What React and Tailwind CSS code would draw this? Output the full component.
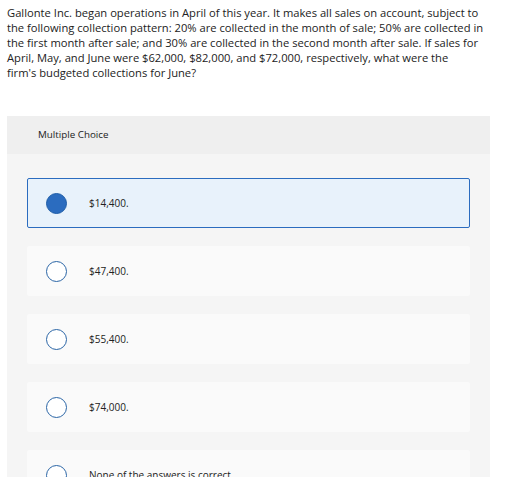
const options = ['$14,400.', '$47,400.', '$55,400.', '$74,000.', 'None of the answers is correct.']

function Radio({ checked }) {
  if (checked) {
    return <span className="block w-[21px] h-[21px] rounded-full bg-[#2b6cbf] border border-[#1f5ea8] shrink-0" />
  }
  return <span className="block w-[21px] h-[21px] rounded-full border-[1.5px] border-[#2a65a6] bg-white shrink-0" />
}

export default function App() {
  const selected = 0
  return (
    <div className="w-[511px] h-[477px] overflow-hidden bg-white text-[#222] font-['Open_Sans',sans-serif]">
      <p className="pl-[7px] pt-[5px] text-[11.2px] leading-[15px] whitespace-nowrap">
        Gallonte Inc. began operations in April of this year. It makes all sales on account, subject to
        <br />
        the following collection pattern: 20% are collected in the month of sale; 50% are collected in
        <br />
        the first month after sale; and 30% are collected in the second month after sale. If sales for
        <br />
        April, May, and June were $62,000, $82,000, and $72,000, respectively, what were the
        <br />
        firm's budgeted collections for June?
      </p>

      <div className="mt-[36px] ml-[7px] w-[483px] bg-[#f5f5f5]">
        <div className="h-[38px] bg-[#efefef] flex items-center pl-[31px] text-[9.8px]">Multiple Choice</div>
        <div className="px-[20px] pt-[24px] flex flex-col gap-[18px]">
          {options.map((opt, i) => (
            <div
              key={opt}
              className={
                i === selected
                  ? 'h-[50px] rounded-[2px] border border-[#2b6cbf] bg-[#e8f2fb] flex items-center pl-[18px]'
                  : 'h-[50px] rounded-[2px] bg-[#fafafa] flex items-center pl-[19px]'
              }
            >
              <Radio checked={i === selected} />
              <span className="ml-[22px] text-[10px]">{opt}</span>
            </div>
          ))}
        </div>
      </div>
    </div>
  )
}
